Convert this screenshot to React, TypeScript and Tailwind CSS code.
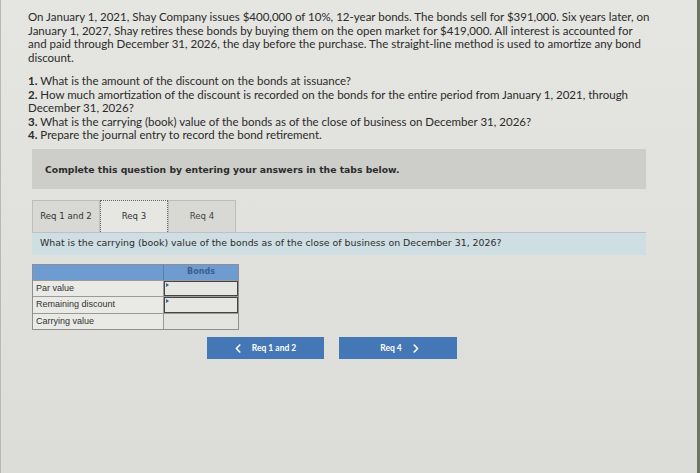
import React from "react";

function Chevron({ dir }: { dir: "left" | "right" }) {
  return (
    <svg width="6" height="9" viewBox="0 0 6 9" fill="none" stroke="white" strokeWidth="1.6" strokeLinecap="round" strokeLinejoin="round">
      {dir === "left" ? <path d="M4.8 1 L1.4 4.5 L4.8 8" /> : <path d="M1.2 1 L4.6 4.5 L1.2 8" />}
    </svg>
  );
}

export default function App() {
  return (
    <div className="w-[700px] h-[473px] bg-gradient-to-b from-[#e5e5e1] to-[#dcdcd8] relative overflow-hidden text-[#2b2b2b]" style={{ fontFamily: "Lato, 'Open Sans', sans-serif" }}>
      <div className="absolute right-0 top-0 w-[3px] h-full bg-[#6a7660]" />
      <div className="absolute left-0 top-0 w-[1px] h-full bg-[#b8b8b4]" />
      <div className="pl-[28px] pt-[10px]">
        <p className="text-[11.5px] leading-[13.5px] w-[624px]">
          On January 1, 2021, Shay Company issues $400,000 of 10%, 12-year bonds. The bonds sell for $391,000. Six years later, on January 1, 2027, Shay retires these bonds by buying them on the open market for $419,000. All interest is accounted for and paid through December 31, 2026, the day before the purchase. The straight-line method is used to amortize any bond discount.
        </p>
        <div className="mt-[10px] text-[11.5px] leading-[13.5px] w-[610px]">
          <p><b>1.</b> What is the amount of the discount on the bonds at issuance?</p>
          <p><b>2.</b> How much amortization of the discount is recorded on the bonds for the entire period from January 1, 2021, through December 31, 2026?</p>
          <p><b>3.</b> What is the carrying (book) value of the bonds as of the close of business on December 31, 2026?</p>
          <p><b>4.</b> Prepare the journal entry to record the bond retirement.</p>
        </div>
      </div>
      <div className="ml-[32px] w-[614px]" style={{ fontFamily: "'DejaVu Sans', Verdana, sans-serif" }}>
        <div className="mt-[7px] h-[40px] bg-[#cdcdca] flex items-center pl-[13px]">
          <span className="text-[9.25px] font-bold text-[#2c2c2c] mt-[2px]">Complete this question by entering your answers in the tabs below.</span>
        </div>
        <div className="mt-[11px] flex h-[32px] items-stretch">
          <div className="w-[68px] bg-[#d8d8d5] border border-[#bdbdb9] border-b-0 flex items-center justify-center text-[8.6px] text-[#333]">Req 1 and 2</div>
          <div className="w-[68px] bg-[#e6e6e3] border border-dotted border-[#666] border-b-0 flex items-center justify-center text-[8.6px] text-[#333]">Req 3</div>
          <div className="w-[68px] bg-[#d8d8d5] border border-[#bdbdb9] border-b-0 flex items-center justify-center text-[8.6px] text-[#444]">Req 4</div>
        </div>
        <div className="h-[23px] bg-[#cedee2] border-t border-[#b9c3c6] flex items-center pl-[8px]">
          <span className="text-[9.4px] text-[#2c2c2c]">What is the carrying (book) value of the bonds as of the close of business on December 31, 2026?</span>
        </div>
        <div className="mt-[9px] w-[207px] border border-[#8e8e8e] text-[8.6px]">
          <div className="flex h-[15px] bg-[#6e9bd0]">
            <div className="w-[131px] border-r border-[#5d7fa8]" />
            <div className="flex-1 flex items-center justify-center font-bold text-[#3b5f8f] text-[8px]">Bonds</div>
          </div>
          {["Par value", "Remaining discount", "Carrying value"].map((l, i) => (
            <div key={l} className="flex h-[16.5px] border-t border-[#9a9a9a] bg-[#e9e9e6]">
              <div className="w-[131px] border-r border-[#9a9a9a] flex items-center pl-[3px] text-[#333]" style={{ fontFamily: "'Liberation Sans', Arial, sans-serif", fontSize: "9px" }}>{l}</div>
              <div className={"flex-1 relative " + (i < 2 ? "border border-[#444] bg-[#e6e6e3]" : "bg-[#e3e3e0]")}>
                {i < 2 && <div className="absolute left-[1px] top-[1px] w-0 h-0 border-l-[3px] border-l-[#3b5f8f] border-y-[2px] border-y-transparent" />}
              </div>
            </div>
          ))}
        </div>
      </div>
      <div className="absolute left-[207px] top-[337px] flex gap-[15px]" style={{ fontFamily: "Lato, 'Liberation Sans', sans-serif" }}>
        <div className="w-[117px] h-[22px] bg-[#4477b6] flex items-center justify-center text-white text-[8.5px] font-bold gap-[11px]">
          <Chevron dir="left" />
          <span>Req 1 and 2</span>
        </div>
        <div className="w-[118px] h-[22px] bg-[#4477b6] flex items-center justify-center text-white text-[8.5px] font-bold gap-[11px] pl-[3px]">
          <span>Req 4</span>
          <Chevron dir="right" />
        </div>
      </div>
    </div>
  );
}
